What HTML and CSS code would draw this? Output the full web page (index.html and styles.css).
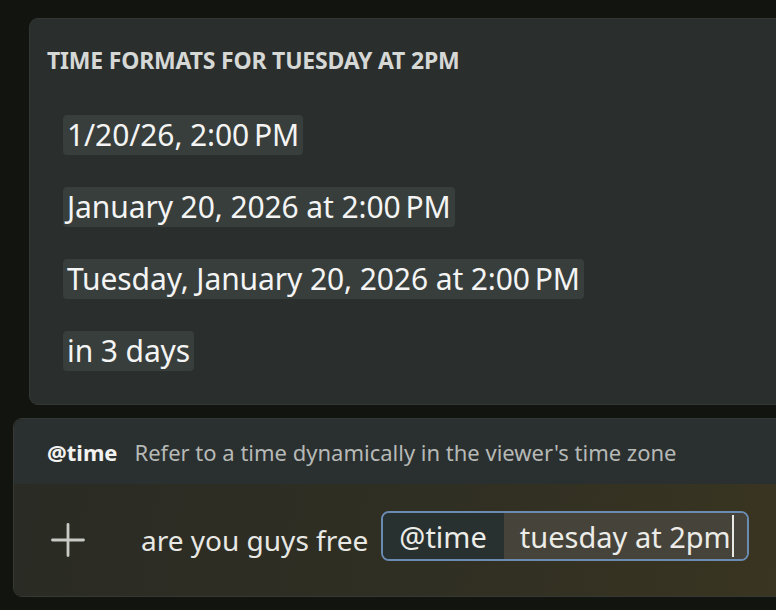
FILE: index.html
```html
<!DOCTYPE html>
<html>
<head>
  <title>Time formats</title>
  <link rel="stylesheet" href="styles.css">
</head>
<body>
  <div class="panel">
    <div class="panel-title">Time formats for Tuesday at 2pm</div>
    <div class="format-list">
      <div class="format-row"><span class="format-chip">1/20/26, 2:00&#8239;PM</span></div>
      <div class="format-row"><span class="format-chip">January 20, 2026 at 2:00&#8239;PM</span></div>
      <div class="format-row"><span class="format-chip">Tuesday, January 20, 2026 at 2:00&#8239;PM</span></div>
      <div class="format-row"><span class="format-chip">in 3 days</span></div>
    </div>
  </div>

  <div class="composer">
    <div class="composer-hint">
      <span class="hint-command">@time</span>
      <span class="hint-text">Refer to a time dynamically in the viewer's time zone</span>
    </div>
    <div class="composer-input">
      <svg class="plus-icon" width="34" height="34" viewBox="0 0 34 34">
        <path d="M17 1.5v31M1.5 17h31" stroke="currentColor" stroke-width="2.8" stroke-linecap="round" fill="none"/>
      </svg>
      <span class="input-text">are you guys free</span>
      <span class="time-pill">
        <span class="pill-command">@time</span>
        <span class="pill-value">tuesday at 2pm<span class="caret"></span></span>
      </span>
    </div>
  </div>
</body>
</html>
```

FILE: styles.css
```css
html, body {
  margin: 0;
  overflow: hidden;
}

body {
  background-color: #121410;
  font-family: "Noto Sans", "Open Sans", sans-serif;
  width: 776px;
  height: 610px;
}

.panel {
  margin: 18px 0 0 29px;
  width: 780px;
  height: 387px;
  box-sizing: border-box;
  background-color: #2a2e2c;
  border: 1px solid #323634;
  border-radius: 9px;
  padding: 28px 0 0 17px;
}

.panel-title {
  color: #d6d8d6;
  font-size: 23px;
  font-weight: bold;
  text-transform: uppercase;
  line-height: 26px;
  letter-spacing: -0.2px;
}

.format-list {
  display: flex;
  flex-direction: column;
  gap: 32px;
  margin-top: 42px;
  padding-left: 16px;
}

.format-row {
  display: flex;
}

.format-chip {
  background-color: #383e3c;
  color: #f3f4f3;
  border-radius: 4px;
  font-size: 30px;
  line-height: 40px;
  height: 40px;
  padding: 0 4px;
  letter-spacing: -0.1px;
}

.composer {
  margin: 13px 0 0 13px;
  width: 790px;
  height: 179px;
  box-sizing: border-box;
  border: 1px solid #363933;
  border-radius: 9px;
  overflow: hidden;
  display: flex;
  flex-direction: column;
}

.composer-hint {
  height: 65px;
  flex: none;
  background-color: #2a2f2f;
  display: flex;
  align-items: center;
  gap: 17px;
  padding-left: 33px;
  font-size: 22px;
}

.hint-command {
  color: #f2f2f0;
  font-weight: bold;
}

.hint-text {
  color: #b6b9b6;
}

.composer-input {
  flex: 1;
  background: linear-gradient(100deg, #2a2b24 0%, #302f23 55%, #3a3521 100%);
  display: flex;
  align-items: center;
  padding-left: 37px;
}

.plus-icon {
  color: #c9cac5;
  margin-right: 56px;
}

.input-text {
  color: #e8e8e4;
  font-size: 28px;
  margin-right: 13px;
}

.time-pill {
  display: flex;
  height: 50px;
  margin-bottom: 8px;
  box-sizing: border-box;
  border: 2px solid #6a8bb2;
  border-radius: 8px;
  overflow: hidden;
  font-size: 29px;
  color: #ececE8;
}

.pill-command {
  background-color: #293130;
  display: flex;
  align-items: center;
  padding: 0 17px 0 16px;
}

.pill-value {
  background-color: #46433a;
  display: flex;
  align-items: center;
  padding: 0 13px 0 16px;
}

.caret {
  width: 2px;
  height: 42px;
  background-color: #e8e8e4;
  margin-left: 1px;
}
```
